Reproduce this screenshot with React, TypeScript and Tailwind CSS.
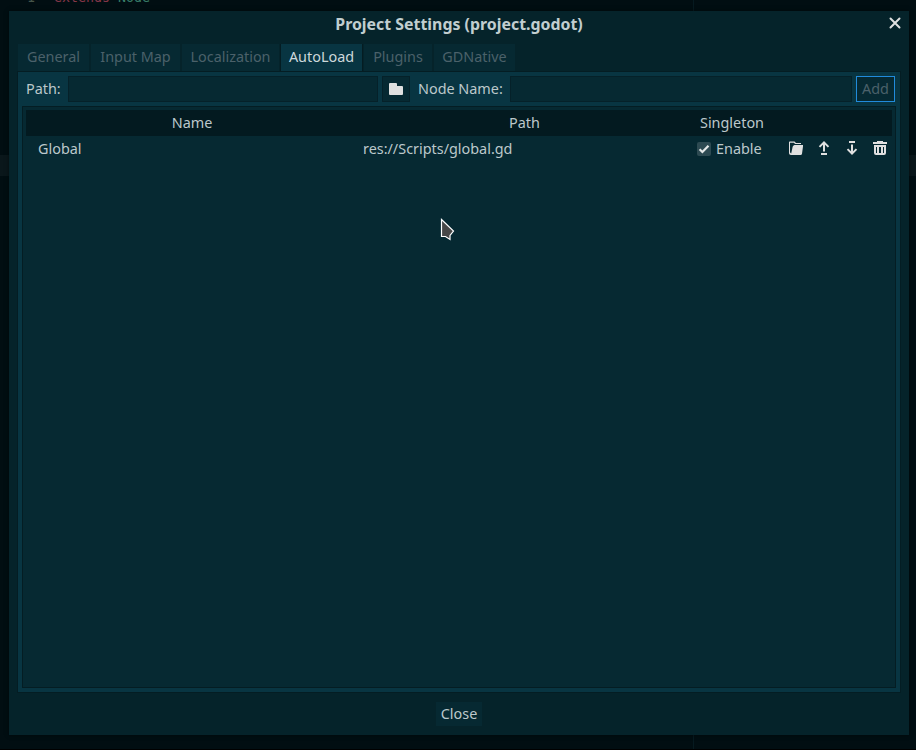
import type { ReactNode } from "react";
import clsx from "clsx";

const TABS = [
  { label: "General", width: "w-[71px]" },
  { label: "Input Map", width: "w-[89px]" },
  { label: "Localization", width: "w-[97px]" },
  { label: "AutoLoad", width: "w-[81px]" },
  { label: "Plugins", width: "w-[68px]" },
  { label: "GDNative", width: "w-[81px]" },
];

const AUTOLOADS = [{ name: "Global", path: "res://Scripts/global.gd", singleton: true }];

export default function App() {
  return (
    <div className="relative h-[750px] w-[916px] overflow-hidden bg-[#010e12] font-['Noto_Sans',sans-serif] text-[14.4px] leading-[20px] text-[#bcc8cb]">
      <ScriptEditor />
      <ProjectSettings />
      <Cursor />
    </div>
  );
}

function ScriptEditor() {
  return (
    <div className="flex h-full flex-col font-['DejaVu_Sans_Mono',monospace] text-[13.3px]">
      <div className="flex h-[155px]">
        <div className="-mt-[12px] flex w-[694px] border-r border-[#061a20] whitespace-pre">
          <span className="w-[54px] pl-[27px] text-[#46554a]">1</span>
          <span className="text-[#853648]">extends </span>
          <span className="text-[#387c68]">Node</span>
        </div>
      </div>
      <div className="h-[21px] bg-[#0a171b]" />
      <div className="w-[694px] flex-1 border-r border-[#061a20]" />
      <div className="h-px bg-black" />
    </div>
  );
}

function ProjectSettings() {
  return (
    <div className="absolute top-[11px] left-[9px] flex h-[724px] w-[900px] flex-col bg-[#05232a] shadow-[0_0_4px_rgba(0,0,0,0.5)]">
      <div className="flex h-[33px] items-start">
        <div className="w-[22px]" />
        <h1 className="flex-1 pt-[3px] text-center text-[15.9px] leading-[20px] font-bold text-[#c1ced0]">
          Project Settings (project.godot)
        </h1>
        <button className="mt-[4px] mr-[6px] size-4">
          <svg viewBox="0 0 16 16" className="size-4" fill="none" stroke="#e0e0e0" strokeWidth="2" strokeLinecap="round">
            <path d="M3.5 3.5l9 9M12.5 3.5l-9 9" />
          </svg>
        </button>
      </div>

      <div className="flex h-[28px] gap-[2px] pl-[9px]">
        {TABS.map((tab) => (
          <div
            key={tab.label}
            className={clsx(
              "flex shrink-0 items-center justify-center pb-[3px]",
              tab.width,
              tab.label === "AutoLoad"
                ? "bg-[#083542] text-[#cdd8db] shadow-[1px_0_0_#041c22,-1px_0_0_#041c22]"
                : "bg-[#062932] text-[#4b616a]",
            )}
          >
            {tab.label}
          </div>
        ))}
      </div>

      <div className="mx-[9px] flex h-[620px] flex-col bg-[#083542] px-1 pt-1 pb-1 shadow-[0_0_0_1px_#041d23]">
        <AddBar />
        <div className="mt-1 flex flex-1 flex-col border border-[#041d23] bg-[#062932] p-[3px]">
          <div className="flex h-[26px] items-center bg-[#031a20]">
            <div className="w-[332px] text-center">Name</div>
            <div className="w-[333px] text-center">Path</div>
            <div className="w-[82px] text-center">Singleton</div>
          </div>
          {AUTOLOADS.map((a) => (
            <div key={a.name} className="flex h-[26px] items-center">
              <div className="w-[337px] pl-3">{a.name}</div>
              <div className="w-[334px]">{a.path}</div>
              <Checkbox checked={a.singleton} />
              <div className="ml-[5px] w-[72px]">Enable</div>
              <RowActions />
            </div>
          ))}
        </div>
      </div>

      <div className="flex flex-1 items-start justify-center pt-[10px]">
        <button className="flex h-[24px] w-[46px] items-center justify-center bg-[#062932]">
          Close
        </button>
      </div>
    </div>
  );
}

function AddBar() {
  return (
    <div className="flex h-[26px] items-center">
      <label className="w-[46px] pl-1">Path:</label>
      <Field className="w-[310px]" />
      <button className="ml-1 flex h-[26px] w-[28px] items-center justify-center border border-[#052129] bg-[#062932]">
        <Icon>
          <path d="M2 2a1 1 0 0 0-1 1v10a1 1 0 0 0 1 1h12a1 1 0 0 0 1-1V6a1 1 0 0 0-1-1H9V3a1 1 0 0 0-1-1z" />
        </Icon>
      </button>
      <label className="w-[100px] pl-2">Node Name:</label>
      <Field className="w-[342px]" />
      <button className="ml-1 flex h-[26px] w-[39px] items-center justify-center border border-[#218bdb] bg-[#062932] text-[#4b616a]">
        Add
      </button>
    </div>
  );
}

function Field({ className }: { className: string }) {
  return <div className={clsx("h-[26px] border border-[#052129] bg-[#062932]", className)} />;
}

function Checkbox({ checked }: { checked: boolean }) {
  return (
    <div className="size-[14px] rounded-[2px] bg-[#2d4a52]">
      {checked && (
        <svg viewBox="0 0 14 14" className="size-[14px]" fill="none" stroke="#e4e8e8" strokeWidth="2.2">
          <path d="M2.6 7.2l2.8 2.8L11.5 3.8" />
        </svg>
      )}
    </div>
  );
}

function RowActions() {
  return (
    <div className="flex gap-3 pb-[2px]">
      <Icon>
        <path d="M2 1.5a.9.9 0 0 0-1 1V13c0 1.200.8 2 2 2h9.500a1.500 1.500 0 0 0 1.500-1.200L15 6.500V5H7.500C6 5 5 5.500 4.600 7L3.200 13.500C2.400 13 2 12.500 2 12V2.800h4L7 4h6V3H8L6.500 1.500z" />
      </Icon>
      <Icon>
        <path d="M7 11.500V4.800L4.200 7.600 2.800 6.200 8 1l5.200 5.200-1.400 1.400L9 4.800V11.500zM5 13h6v2H5z" />
      </Icon>
      <Icon>
        <path d="M5 1h6v2H5zM7 4.500v6.700L4.200 8.400 2.800 9.800 8 15l5.200-5.200-1.400-1.400L9 11.200V4.500z" />
      </Icon>
      <Icon>
        <path d="M5 1v1H1v2h14V2h-4V1z" />
        <path d="M2 5v8a2 2 0 0 0 2 2h8a2 2 0 0 0 2-2V5zm2 2h1v6H4zm3 0h2v6H7zm4 0h1v6h-1z" fillRule="evenodd" />
      </Icon>
    </div>
  );
}

function Icon({ children }: { children: ReactNode }) {
  return (
    <svg viewBox="0 0 16 16" className="size-4" fill="#e0e0e0">
      {children}
    </svg>
  );
}

function Cursor() {
  return (
    <svg className="absolute top-[218px] left-[440px] h-[24px] w-[16px]" viewBox="0 0 16 24">
      <path d="M1.500 1.500V18.500H5.500L10 21.500V17.500L13.500 13Z" fill="#474747" stroke="#ffffff" strokeWidth="1.200" />
    </svg>
  );
}
